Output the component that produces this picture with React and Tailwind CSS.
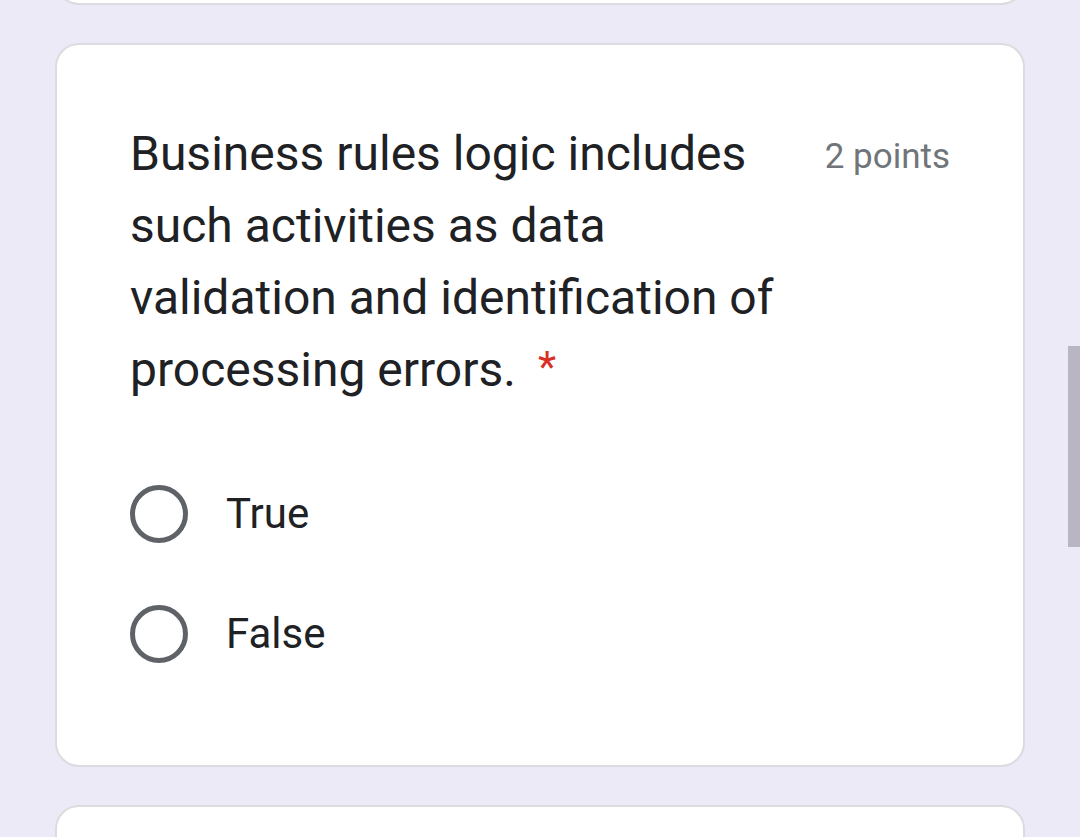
import React from 'react'

const sans = { fontFamily: 'Roboto, "Liberation Sans", sans-serif' }

function Radio({ label }) {
  return (
    <div className="flex items-center h-[60px]">
      <span className="w-[58px] h-[58px] rounded-full border-[5px] border-[#5f6368] shrink-0" />
      <span className="ml-[38px] text-[42px] leading-none text-[#202124]">{label}</span>
    </div>
  )
}

export default function App() {
  return (
    <div className="relative h-[837px] overflow-hidden bg-[#edeaf7]" style={sans}>
      <div className="flex flex-col gap-[38px] px-[55px]">
        <div className="mt-[-95px] h-[100px] rounded-[24px] border-2 border-[#dadce0] bg-white" />

        <div className="h-[724px] rounded-[24px] border-2 border-[#dadce0] bg-white px-[73px] pt-[73px]">
          <div className="flex items-start justify-between">
            <div className="text-[48px] leading-[72px] text-[#202124]">
              Business rules logic includes<br />
              such activities as data<br />
              validation and identification of<br />
              processing errors.
              <span className="relative top-[-5px] ml-[22px] text-[42px] leading-none text-[#d93025]">*</span>
            </div>
            <div className="pt-[21px] text-[35px] leading-none text-[#70757a]">2 points</div>
          </div>

          <div className="mt-[78px] flex flex-col gap-[60px]">
            <Radio label="True" />
            <Radio label="False" />
          </div>
        </div>

        <div className="h-[100px] rounded-[24px] border-2 border-[#dadce0] bg-white" />
      </div>

      {/* scrollbar thumb */}
      <div className="absolute right-0 top-[346px] w-[12px] h-[201px] bg-[#b9b5c2]" />
    </div>
  )
}
